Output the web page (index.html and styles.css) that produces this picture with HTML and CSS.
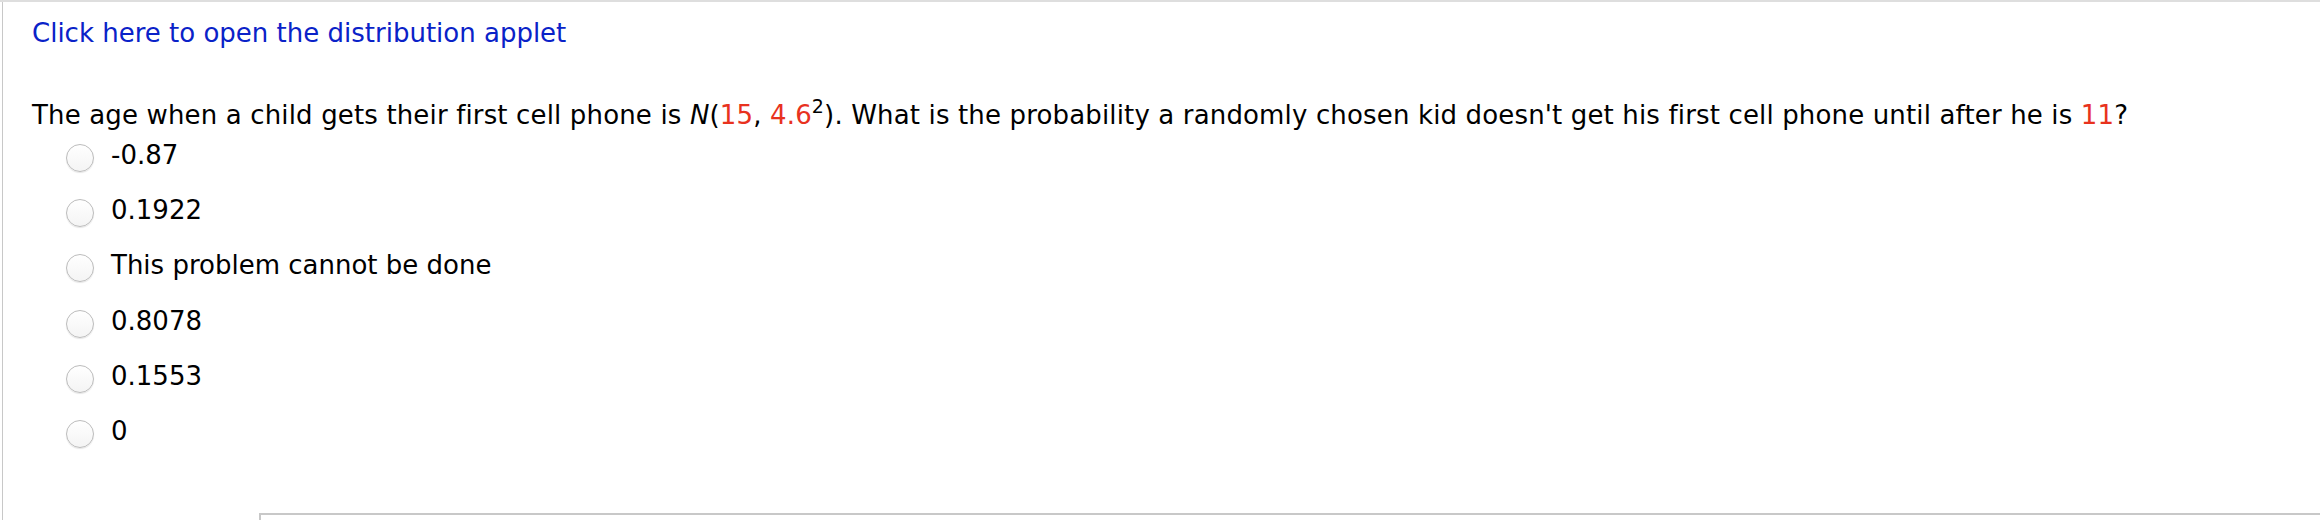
FILE: index.html
```html
<!DOCTYPE html>
<html>
<head>
<meta charset="utf-8">
<link rel="stylesheet" href="styles.css">
</head>
<body>
<div class="page">
  <div class="frame">
    <a class="applet-link" href="#">Click here to open the distribution applet</a>
    <p class="question">The age when a child gets their first cell phone is <i>N</i>(<span class="red">15</span>, <span class="red">4.6</span><sup>2</sup>). What is the probability a randomly chosen kid doesn't get his first cell phone until after he is <span class="red">11</span>?</p>
    <div class="options">
      <label class="option"><span class="radio"></span><span class="opt-text">-0.87</span></label>
      <label class="option"><span class="radio"></span><span class="opt-text">0.1922</span></label>
      <label class="option"><span class="radio"></span><span class="opt-text">This problem cannot be done</span></label>
      <label class="option"><span class="radio"></span><span class="opt-text">0.8078</span></label>
      <label class="option"><span class="radio"></span><span class="opt-text">0.1553</span></label>
      <label class="option"><span class="radio"></span><span class="opt-text">0</span></label>
    </div>
    <div class="next-box"></div>
  </div>
</div>
</body>
</html>
```

FILE: styles.css
```css
html, body {
  margin: 0;
  padding: 0;
  background: #ffffff;
}

body {
  font-family: Verdana, "DejaVu Sans", sans-serif;
  font-size: 26px;
  color: #000000;
  width: 2320px;
  height: 520px;
  overflow: hidden;
}

.page {
  border-top: 2px solid #dedede;
  height: 518px;
}

.frame {
  margin-left: 2px;
  border-left: 1px solid #c8c8c8;
  padding-left: 29px;
  padding-top: 16px;
  height: 502px;
  display: flex;
  flex-direction: column;
  align-items: flex-start;
}

.applet-link {
  display: block;
  line-height: 30px;
  color: #0a22c8;
  text-decoration: none;
}

.question {
  margin: 52px 0 0 0;
  line-height: 30px;
  white-space: nowrap;
  letter-spacing: 0.15px;
}

.question i {
  font-style: italic;
}

.red {
  color: #e8321e;
}

.question sup {
  font-size: 19px;
  line-height: 0;
  vertical-align: 11px;
}

.options {
  margin-top: 10px;
  display: flex;
  flex-direction: column;
  gap: 25.2px;
}

.option {
  display: flex;
  align-items: flex-start;
  height: 30px;
  line-height: 30px;
  margin-left: 34px;
}

.radio {
  box-sizing: border-box;
  width: 28px;
  height: 28px;
  margin-top: 4px;
  border-radius: 50%;
  border: 1px solid #bcbcbc;
  background: linear-gradient(#ffffff, #f4f4f4);
  box-shadow: 0 1px 1px rgba(0, 0, 0, 0.1);
  flex: none;
}

.opt-text {
  margin-left: 17px;
}

.next-box {
  margin-top: 67px;
  margin-left: 227px;
  align-self: stretch;
  height: 40px;
  border-top: 2px solid #c8c8c8;
  border-left: 2px solid #c8c8c8;
}
```
